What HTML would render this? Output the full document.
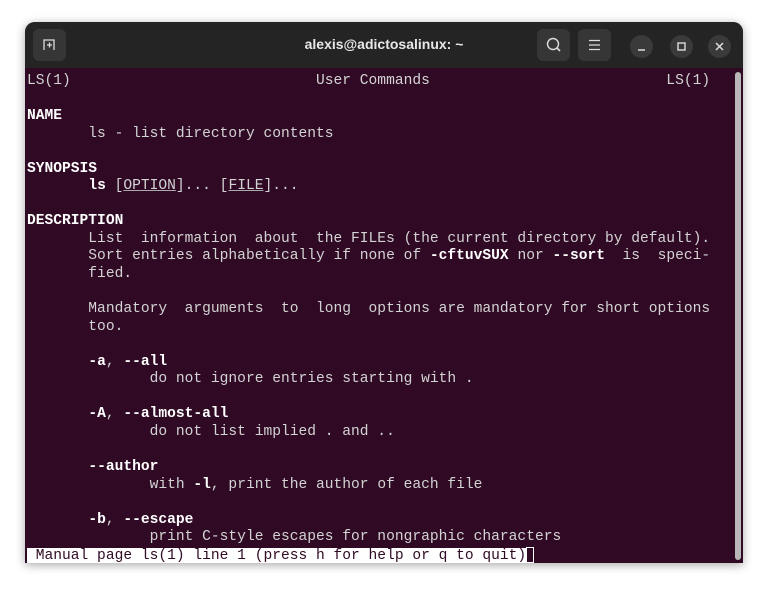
<!DOCTYPE html>
<html><head><style>
body{margin:0;width:768px;height:591px;background:#fff;position:relative;overflow:hidden}
.win{position:absolute;left:25px;top:22px;width:718px;height:541px;background:#300a24;border-radius:10px 10px 0 0;box-shadow:0 2px 10px rgba(0,0,0,.35);overflow:hidden}
.hdr{position:absolute;left:0;top:0;width:718px;height:46px;background:#242424}
.title{position:absolute;left:0;right:0;top:14px;text-align:center;color:#e8e8e8;font:bold 14px "Liberation Sans",sans-serif}
.btn{position:absolute;top:7px;width:33px;height:32px;background:#363636;border-radius:6px}
.cb{position:absolute;top:13px;width:23px;height:23px;background:#3a3a3a;border-radius:50%}
pre{position:absolute;left:2px;top:51px;margin:0;font:14.6px/17.55px "Liberation Mono",monospace;color:#d3d3d3;white-space:pre}
b{color:#fff}
u{text-decoration-color:#aaa}
.sb{position:absolute;left:710px;top:50px;width:6px;height:488px;background:#b8b8b8;border-radius:3px}
.status{background:#fff;color:#300a24}
.cur{display:inline-block;width:8px;height:16px;border:1px solid #fff;vertical-align:-4px;box-sizing:border-box}
</style></head><body>
<div class="win">
<div class="hdr">
<div class="btn" style="left:8px"><svg width="33" height="32"><path d="M11 21V11h10v10M14 16h5M16.5 13.5v5" stroke="#ddd" stroke-width="1.3" fill="none"/></svg></div>
<div class="title">alexis@adictosalinux: ~</div>
<div class="btn" style="left:512px"><svg width="33" height="32"><circle cx="16" cy="15" r="5.5" stroke="#ddd" stroke-width="1.4" fill="none"/><path d="M20 19l3 3" stroke="#ddd" stroke-width="1.6"/></svg></div>
<div class="btn" style="left:553px"><svg width="33" height="32"><path d="M11 11.5h11M11 16h11M11 20.5h11" stroke="#ddd" stroke-width="1.2"/></svg></div>
<div class="cb" style="left:605px"><svg width="23" height="23"><path d="M8 15h7" stroke="#ddd" stroke-width="1.5"/></svg></div>
<div class="cb" style="left:645px"><svg width="23" height="23"><rect x="8" y="8" width="7" height="7" stroke="#ddd" stroke-width="1.4" fill="none"/></svg></div>
<div class="cb" style="left:683px"><svg width="23" height="23"><path d="M8 8l7 7M15 8l-7 7" stroke="#ddd" stroke-width="1.5"/></svg></div>
</div>
<pre>LS(1)                            User Commands                           LS(1)

<b>NAME</b>
       ls - list directory contents

<b>SYNOPSIS</b>
       <b>ls</b> [<u>OPTION</u>]... [<u>FILE</u>]...

<b>DESCRIPTION</b>
       List  information  about  the FILEs (the current directory by default).
       Sort entries alphabetically if none of <b>-cftuvSUX</b> nor <b>--sort</b>  is  speci‐
       fied.

       Mandatory  arguments  to  long  options are mandatory for short options
       too.

       <b>-a</b>, <b>--all</b>
              do not ignore entries starting with .

       <b>-A</b>, <b>--almost-all</b>
              do not list implied . and ..

       <b>--author</b>
              with <b>-l</b>, print the author of each file

       <b>-b</b>, <b>--escape</b>
              print C-style escapes for nongraphic characters
<span class="status"> Manual page ls(1) line 1 (press h for help or q to quit)</span><span class="cur"></span></pre>
<div class="sb"></div>
</div>
</body></html>
